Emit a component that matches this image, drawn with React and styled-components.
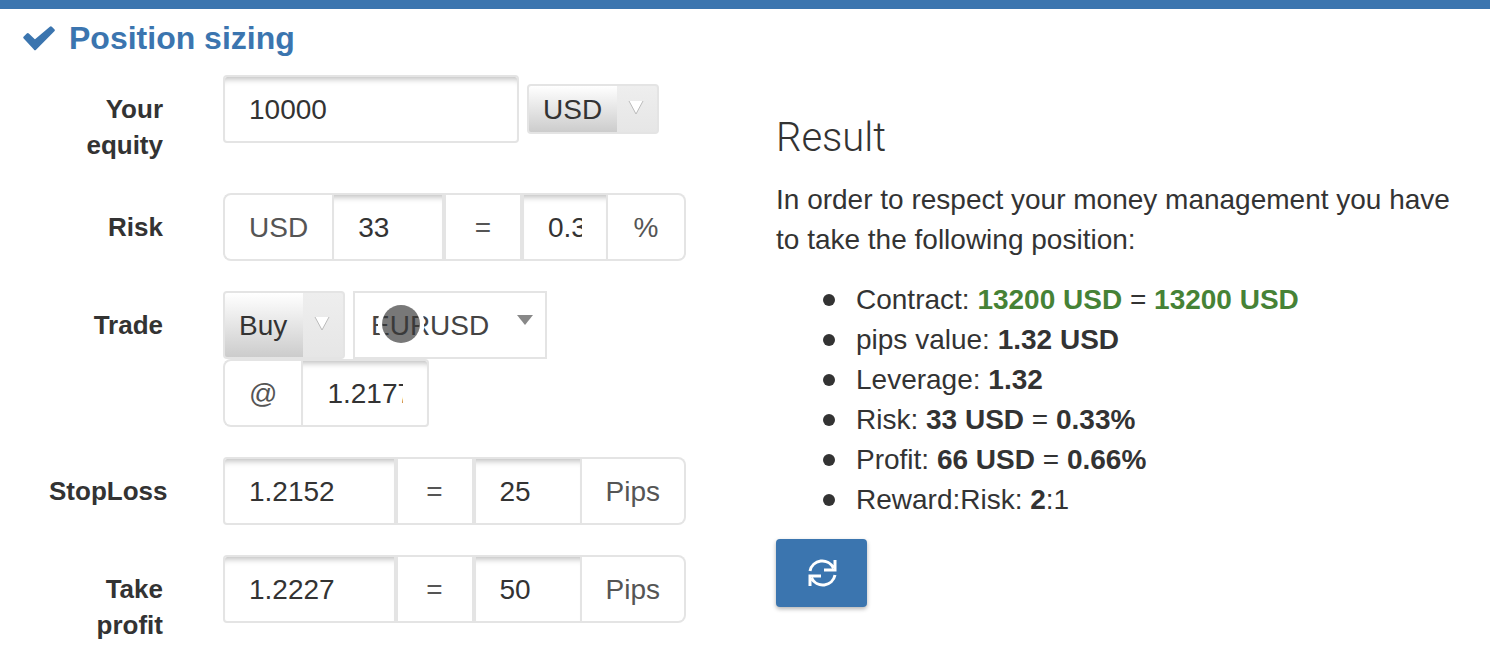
import styled, { createGlobalStyle } from "styled-components";

const results = [
  { label: "Contract: ", parts: [["13200 USD", "good"], [" = "], ["13200 USD", "good"]] },
  { label: "pips value: ", parts: [["1.32 USD", "bold"]] },
  { label: "Leverage: ", parts: [["1.32", "bold"]] },
  { label: "Risk: ", parts: [["33 USD", "bold"], [" = "], ["0.33%", "bold"]] },
  { label: "Profit: ", parts: [["66 USD", "bold"], [" = "], ["0.66%", "bold"]] },
  { label: "Reward:Risk: ", parts: [["2", "bold"], [":1"]] },
];

const SplitSelect = ({ id, label, value, width, height }) => (
  <SelectWrap $width={width}>
    <Split id={id} aria-label={label} defaultValue={value} $height={height}>
      <option>{value}</option>
    </Split>
    <SplitArrow viewBox="0 0 16 16">
      <path d="M1 1h14L8 14z" fill="#fff" />
      <path d="M1 1l7 13 7-13" fill="none" stroke="#bbb" />
    </SplitArrow>
  </SelectWrap>
);

export default function App() {
  return (
    <>
      <GlobalStyle />
      <Page>
        <Title>
          <CheckIcon viewBox="0 0 32 25">
            <path d="M1.800 11.500 4.800 8.700l7 6.600L27.800 1.800 30.300 4.300 12 22.600z" />
          </CheckIcon>
          Position sizing
        </Title>
        <Columns>
          <Form>
            <Row>
              <Label htmlFor="equity">Your equity</Label>
              <Fields>
                <TextInput id="equity" defaultValue="10000" $width={296} $round="4px" />
                <SplitSelect id="currency" label="Currency" value="USD" width={132} height={50} />
              </Fields>
            </Row>
            <Row>
              <Label htmlFor="risk">Risk</Label>
              <Fields>
                <Group>
                  <Addon $side="left">USD</Addon>
                  <TextInput id="risk" defaultValue="33" $grow />
                  <Addon>=</Addon>
                  <TextInput aria-label="Risk percent" defaultValue="0.33" $width={86} />
                  <Addon $side="right">%</Addon>
                </Group>
              </Fields>
            </Row>
            <Row>
              <Label htmlFor="side">Trade</Label>
              <Fields>
                <SplitSelect id="side" label="Trade side" value="Buy" width={122} height={68} />
                <SelectWrap $width={194}>
                  <PairSelect aria-label="Pair" defaultValue="EURUSD">
                    <option>EURUSD</option>
                  </PairSelect>
                  <PairArrow viewBox="0 0 16 10">
                    <path d="M0 0h16L8 10z" fill="#888" />
                  </PairArrow>
                  <Pointer viewBox="0 0 46 46">
                    <circle cx="23" cy="23" r="21" fill="none" stroke="#fff" strokeWidth="5" />
                    <circle cx="23" cy="23" r="19" fill="rgba(53, 53, 53, 0.67)" />
                  </Pointer>
                </SelectWrap>
                <Group $inline>
                  <Addon $side="left">@</Addon>
                  <TextInput aria-label="Price" defaultValue="1.2177" $width={128} $round="0 4px 4px 0" />
                </Group>
              </Fields>
            </Row>
            <Row>
              <Label htmlFor="stop">StopLoss</Label>
              <Fields>
                <Group>
                  <TextInput id="stop" defaultValue="1.2152" $grow $round="4px 0 0 4px" />
                  <Addon>=</Addon>
                  <TextInput aria-label="StopLoss pips" defaultValue="25" $width={108} />
                  <Addon $side="right">Pips</Addon>
                </Group>
              </Fields>
            </Row>
            <Row>
              <Label htmlFor="profit">Take profit</Label>
              <Fields>
                <Group>
                  <TextInput id="profit" defaultValue="1.2227" $grow $round="4px 0 0 4px" />
                  <Addon>=</Addon>
                  <TextInput aria-label="Take profit pips" defaultValue="50" $width={108} />
                  <Addon $side="right">Pips</Addon>
                </Group>
              </Fields>
            </Row>
          </Form>
          <Result>
            <ResultTitle>Result</ResultTitle>
            <p>
              In order to respect your money management you have to take the
              following position:
            </p>
            <ResultList>
              {results.map((item) => (
                <li key={item.label}>
                  {item.label}
                  {item.parts.map(([text, kind], i) =>
                    kind ? <Value key={i} $good={kind === "good"}>{text}</Value> : text
                  )}
                </li>
              ))}
            </ResultList>
            <RefreshButton type="button" aria-label="Refresh">
              <svg viewBox="0 0 30 30" width="30" height="30">
                <path d="M3 13A12.500 12.500 0 0 1 26.500 10M28 2v10H17M28 17A12.500 12.500 0 0 1 4.500 20M3 28V18h11" />
              </svg>
            </RefreshButton>
          </Result>
        </Columns>
      </Page>
    </>
  );
}

const GlobalStyle = createGlobalStyle`
  * {
    box-sizing: border-box;
  }

  body {
    margin: 0;
    background: #fff;
    color: #333;
    font-family: "Liberation Sans", Arial, sans-serif;
    font-size: 28px;
    line-height: 40px;
  }

  input, select, button {
    font: inherit;
    color: inherit;
    margin: 0;
  }
`;

const Page = styled.main`
  border-top: 9px solid #3b75af;
`;

const Title = styled.h1`
  display: flex;
  align-items: center;
  gap: 14px;
  margin: 0;
  padding: 11px 23px 19px;
  color: #3b75af;
  font-size: 32px;
  line-height: 36px;
`;

const CheckIcon = styled.svg`
  width: 32px;
  height: 25px;
  fill: currentColor;
  stroke: currentColor;
  stroke-width: 3;
  stroke-linejoin: round;
`;

const Columns = styled.div`
  display: grid;
  grid-template-columns: repeat(2, minmax(0, 1fr));
  gap: 40px;
  padding: 0 27px 0 49px;
`;

const Form = styled.form`
  display: flex;
  flex-direction: column;
  gap: 30px;
  padding-right: 50px;
`;

const Row = styled.div`
  display: grid;
  grid-template-columns: 114px minmax(0, 1fr);
  gap: 60px;
`;

const Label = styled.label`
  padding-top: 16px;
  font-size: 26px;
  font-weight: 700;
  line-height: 36px;
  text-align: right;
`;

const Fields = styled.div`
  display: flex;
  flex-wrap: wrap;
  align-content: flex-start;
  align-items: center;
  column-gap: 8px;
`;

const Group = styled.div`
  display: flex;
  width: ${({ $inline }) => ($inline ? "auto" : "100%")};
`;

const TextInput = styled.input`
  flex: ${({ $grow }) => ($grow ? "1 1 0" : "none")};
  width: ${({ $width }) => ($width ? `${$width}px` : "auto")};
  min-width: 0;
  height: 68px;
  padding: 2px 24px 0;
  border: 2px solid #e4e4e4;
  border-radius: ${({ $round }) => $round || 0};
  background: #fff;
  box-shadow: inset 0 8px 6px -6px #bbb;
  outline: none;
`;

const Addon = styled.span`
  display: flex;
  align-items: center;
  justify-content: center;
  min-width: 78px;
  height: 68px;
  padding: 2px 24px 0;
  border: 2px solid #e4e4e4;
  border-left-width: ${({ $side }) => ($side === "right" ? 0 : "2px")};
  border-right-width: ${({ $side }) => ($side === "left" ? 0 : "2px")};
  border-radius: ${({ $side }) =>
    $side === "left" ? "8px 0 0 8px" : $side === "right" ? "0 8px 8px 0" : 0};
  color: #555;
`;

const SelectWrap = styled.div`
  position: relative;
  width: ${({ $width }) => $width}px;
`;

const Split = styled.select`
  display: block;
  width: 100%;
  height: ${({ $height }) => $height}px;
  padding: 2px 14px 0;
  appearance: none;
  border: 2px solid #e4e4e4;
  border-radius: 4px;
  background:
    linear-gradient(#eee, #e6e6e6) right / 40px 100% no-repeat,
    linear-gradient(#fff, #ccc);
`;

const SplitArrow = styled.svg`
  position: absolute;
  top: calc(50% - 9px);
  right: 15px;
  width: 16px;
  height: 16px;
  pointer-events: none;
`;

const PairSelect = styled.select`
  display: block;
  width: 100%;
  height: 68px;
  padding: 2px 16px 0;
  appearance: none;
  border: 2px solid #e4e4e4;
  border-radius: 0;
  background: #fff;
  color: #444;
`;

const PairArrow = styled.svg`
  position: absolute;
  top: 24px;
  right: 14px;
  width: 16px;
  height: 10px;
  pointer-events: none;
`;

const Pointer = styled.svg`
  position: absolute;
  top: 10px;
  left: 25px;
  width: 46px;
  height: 46px;
  pointer-events: none;
`;

const Result = styled.section`
  padding-top: 41px;

  > p {
    margin: 0 0 20px;
  }
`;

const ResultTitle = styled.h2`
  margin: 0 0 20px;
  font-family: Roboto, sans-serif;
  font-size: 40px;
  font-weight: 300;
  line-height: 44px;
`;

const ResultList = styled.ul`
  margin: 0 0 19px;
  padding-left: 80px;
  list-style: none;

  > li::before {
    content: "";
    display: inline-block;
    width: 12px;
    height: 12px;
    margin: 0 21px 0 -33px;
    border-radius: 50%;
    background: #333;
    vertical-align: 3px;
  }
`;

const Value = styled.strong`
  color: ${({ $good }) => ($good ? "#468236" : "inherit")};
`;

const RefreshButton = styled.button`
  display: flex;
  align-items: center;
  justify-content: center;
  width: 91px;
  height: 68px;
  border: 0;
  border-radius: 4px;
  background: #3b75af;
  box-shadow: 0 2px 4px rgba(0, 0, 0, 0.3);

  path {
    fill: none;
    stroke: #fff;
    stroke-width: 3;
  }
`;
